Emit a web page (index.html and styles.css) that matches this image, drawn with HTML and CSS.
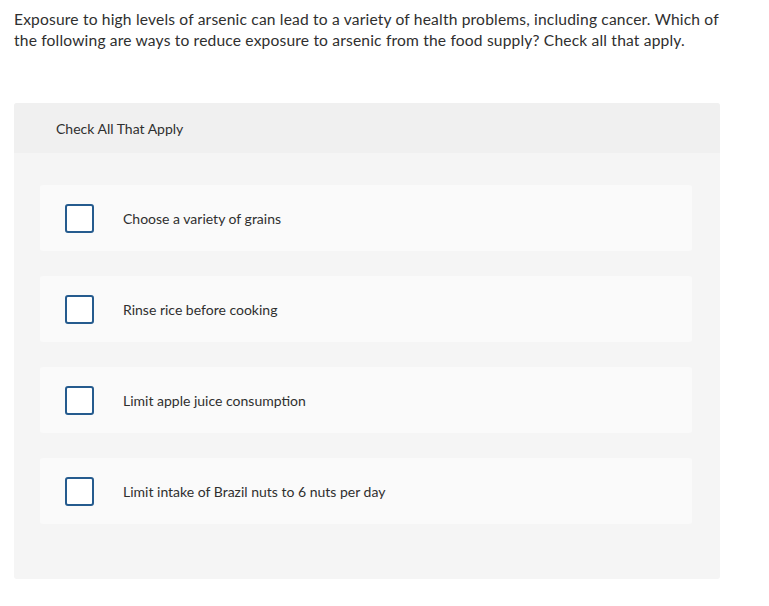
FILE: index.html
```html
<!DOCTYPE html>
<html>
<head>
<meta charset="utf-8">
<link rel="stylesheet" href="styles.css">
</head>
<body>
<div class="page">
  <p class="question">Exposure to high levels of arsenic can lead to a variety of health problems, including cancer. Which of the following are ways to reduce exposure to arsenic from the food supply? Check all that apply.</p>
  <div class="panel">
    <div class="panel-head">Check All That Apply</div>
    <div class="panel-body">
      <label class="choice"><span class="box"></span><span class="label">Choose a variety of grains</span></label>
      <label class="choice"><span class="box"></span><span class="label">Rinse rice before cooking</span></label>
      <label class="choice"><span class="box"></span><span class="label">Limit apple juice consumption</span></label>
      <label class="choice"><span class="box"></span><span class="label">Limit intake of Brazil nuts to 6 nuts per day</span></label>
    </div>
  </div>
</div>
</body>
</html>
```
FILE: styles.css
```css
html, body {
  margin: 0;
  padding: 0;
  background: #fff;
}
body {
  font-family: Lato, "Open Sans", sans-serif;
  color: #2f2f2f;
}
.page {
  padding: 9px 49px 0 14px;
}
.question {
  margin: 0 -24px 0 0;
  font-size: 15.6px;
  line-height: 21px;
  letter-spacing: 0.17px;
}
.panel {
  margin-top: 52px;
  border-radius: 3px;
  overflow: hidden;
  background: #f5f5f5;
}
.panel-head {
  background: #f0f0f0;
  height: 50px;
  display: flex;
  align-items: center;
  padding-left: 42px;
  font-size: 14px;
}
.panel-body {
  padding: 32px 28px 55px 26px;
  display: flex;
  flex-direction: column;
  gap: 25px;
}
.choice {
  display: flex;
  align-items: center;
  height: 66px;
  background: #fafafa;
  border-radius: 3px;
  padding-left: 25px;
}
.box {
  width: 25px;
  height: 25px;
  border: 2px solid #255b8e;
  border-radius: 3px;
  background: #fff;
  flex: none;
}
.label {
  margin-left: 29px;
  font-size: 14px;
}
```
